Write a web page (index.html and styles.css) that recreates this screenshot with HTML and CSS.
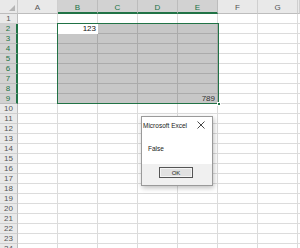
FILE: index.html
```html
<!DOCTYPE html>
<html lang="en">
<head>
    <meta charset="UTF-8">
    <title>Excel</title>
    <link rel="stylesheet" href="styles.css">
</head>
<body>
    <div class="sheet">
        <!-- cabecera de columnas -->
        <div class="corner"><span class="tri"></span></div>
        <div class="col-head">A</div>
        <div class="col-head on">B</div>
        <div class="col-head on">C</div>
        <div class="col-head on">D</div>
        <div class="col-head on">E</div>
        <div class="col-head">F</div>
        <div class="col-head">G</div>
        <div class="col-head"></div>

        <!-- cabecera de filas -->
        <div class="row-head">1</div>
        <div class="row-head on">2</div>
        <div class="row-head on">3</div>
        <div class="row-head on">4</div>
        <div class="row-head on">5</div>
        <div class="row-head on">6</div>
        <div class="row-head on">7</div>
        <div class="row-head on">8</div>
        <div class="row-head on">9</div>
        <div class="row-head">10</div>
        <div class="row-head">11</div>
        <div class="row-head">12</div>
        <div class="row-head">13</div>
        <div class="row-head">14</div>
        <div class="row-head">15</div>
        <div class="row-head">16</div>
        <div class="row-head">17</div>
        <div class="row-head">18</div>
        <div class="row-head">19</div>
        <div class="row-head">20</div>
        <div class="row-head">21</div>
        <div class="row-head">22</div>
        <div class="row-head">23</div>
        <div class="row-head">24</div>

        <!-- celdas -->
        <div class="cells"></div>
        <div class="sel-fill"></div>
        <div class="active-cell">123</div>
        <div class="value-e9">789</div>
        <div class="sel-border"><span class="handle"></span></div>
    </div>

    <div class="dialog">
        <div class="dialog-title">
            <span>Microsoft Excel</span>
            <svg class="close" width="8" height="8" viewBox="0 0 8 8">
                <path d="M0.5 0.5 L7.5 7.5 M7.5 0.5 L0.5 7.5" stroke="#333" stroke-width="0.9" fill="none"/>
            </svg>
        </div>
        <div class="dialog-body">False</div>
        <div class="dialog-foot">
            <button class="ok">OK</button>
        </div>
    </div>
</body>
</html>
```

FILE: styles.css
```css
/* Estilos generales */
body {
    margin: 0;
    background: #fff;
    font-family: "Liberation Sans", Arial, sans-serif;
    overflow: hidden;
}

/* Hoja de cálculo */
.sheet {
    display: grid;
    grid-template-columns: 18px repeat(7, 40px) 1fr;
    grid-template-rows: 14px repeat(24, 10px);
    width: 300px;
    height: 248px;
    overflow: hidden;
}

.corner {
    grid-column: 1;
    grid-row: 1;
    position: relative;
    background: #e9e9e9;
    border-right: 1px solid #c8c8c8;
    border-bottom: 1px solid #bdbdbd;
    box-sizing: border-box;
}

.tri {
    position: absolute;
    right: 2px;
    bottom: 2px;
    border-left: 6px solid transparent;
    border-bottom: 6px solid #b4b4b4;
}

.col-head {
    grid-row: 1;
    background: #e9e9e9;
    color: #555;
    font-size: 8px;
    line-height: 15px;
    text-align: center;
    border-right: 1px solid #cfcfcf;
    border-bottom: 1px solid #bdbdbd;
    box-sizing: border-box;
}

.col-head.on {
    background: #d2d2d2;
    color: #217346;
    border-bottom: 2px solid #217346;
    border-right-color: #bcbcbc;
}

.row-head {
    grid-column: 1;
    background: #e9e9e9;
    color: #555;
    font-size: 8px;
    line-height: 10px;
    text-align: center;
    border-right: 1px solid #bdbdbd;
    border-bottom: 1px solid #cfcfcf;
    box-sizing: border-box;
}

.row-head.on {
    background: #d2d2d2;
    color: #217346;
    border-right: 2px solid #217346;
    border-bottom-color: #bcbcbc;
}

/* Rejilla de celdas */
.cells {
    grid-column: 2 / -1;
    grid-row: 2 / -1;
    background-image:
        linear-gradient(to right, transparent 39px, #dcdcdc 39px),
        linear-gradient(to bottom, transparent 9px, #dcdcdc 9px);
    background-size: 40px 10px;
}

/* Selección B2:E9 */
.sel-fill {
    grid-column: 3 / 7;
    grid-row: 3 / 11;
    background: rgba(0, 0, 0, 0.22);
}

.active-cell {
    grid-column: 3;
    grid-row: 3;
    background: #fff;
    font-size: 8px;
    line-height: 10px;
    text-align: right;
    padding-right: 2px;
    color: #111;
}

.value-e9 {
    grid-column: 6;
    grid-row: 10;
    font-size: 8px;
    line-height: 10px;
    text-align: right;
    padding-right: 3px;
    color: #333;
}

.sel-border {
    grid-column: 3 / 7;
    grid-row: 3 / 11;
    margin: -1px -1px 0 -1px;
    border: 1px solid #217346;
    position: relative;
}

.handle {
    position: absolute;
    right: -3px;
    bottom: -3px;
    width: 4px;
    height: 4px;
    background: #217346;
    border: 1px solid #fff;
    box-sizing: border-box;
}

/* Cuadro de diálogo */
.dialog {
    position: absolute;
    left: 141px;
    top: 116px;
    width: 72px;
    height: 70px;
    box-sizing: border-box;
    border: 1px solid #9a9a9a;
    background: #fff;
    box-shadow: 1px 2px 5px rgba(0, 0, 0, 0.25);
    display: flex;
    flex-direction: column;
    font-size: 6.5px;
    color: #222;
}

.dialog-title {
    display: flex;
    justify-content: space-between;
    align-items: center;
    height: 16px;
    padding: 0 7px 0 1px;
}

.dialog-body {
    flex: 1;
    padding: 12px 0 0 6px;
}

.dialog-foot {
    height: 21px;
    background: #f0f0f0;
    display: flex;
    justify-content: flex-end;
    align-items: flex-start;
    padding: 3px 19px 0 0;
    box-sizing: border-box;
}

.ok {
    width: 34px;
    height: 11px;
    padding: 0;
    font-family: inherit;
    font-size: 6px;
    color: #222;
    background: #e1e1e1;
    border: 1px solid #555;
    box-shadow: inset 0 0 0 1px #f4f4f4;
}
```
